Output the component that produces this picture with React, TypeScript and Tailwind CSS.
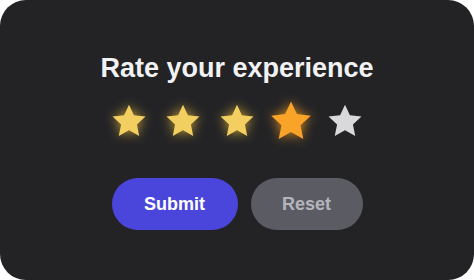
const STAR = "M12 2.2l2.95 6.35 6.95.8-5.15 4.75 1.4 6.85L12 17.5l-6.15 3.45 1.4-6.85L2.1 9.35l6.95-.8z";

type StarProps = { color: string; glow?: string; big?: boolean };

const Star = ({ color, glow, big }: StarProps) => (
  <div className="flex h-[48px] w-[54px] items-center justify-center">
    <svg
      viewBox="0 0 24 24"
      className={big ? "h-[48px] w-[48px]" : "h-[40px] w-[40px]"}
      style={glow ? { filter: `drop-shadow(0 0 6px ${glow})` } : undefined}
    >
      <path d={STAR} fill={color} />
    </svg>
  </div>
);

export default function App() {
  const stars: StarProps[] = [
    { color: "#f3cf62", glow: "rgba(245,200,60,0.75)" },
    { color: "#f3cf62", glow: "rgba(245,200,60,0.75)" },
    { color: "#f3cf62", glow: "rgba(245,200,60,0.75)" },
    { color: "#f9a429", glow: "rgba(250,160,30,0.85)", big: true },
    { color: "#d9d9dc" },
  ];

  return (
    <div className="h-[280px] w-[474px] bg-white">
      <div className="flex h-full w-full flex-col items-center rounded-[26px] bg-[#232326] pt-[51px] font-['Liberation_Sans',Arial,sans-serif]">
        <h1 className="text-[27px] font-bold leading-[34px] text-[#f2f2f4]">
          Rate your experience
        </h1>
        <div className="mt-[12px] flex items-center">
          {stars.map((s, i) => (
            <Star key={i} {...s} />
          ))}
        </div>
        <div className="mt-[33px] flex gap-[13px]">
          <button className="h-[52px] w-[126px] rounded-full bg-[#4a46dc] text-[18px] font-bold text-white">
            Submit
          </button>
          <button className="h-[52px] w-[112px] rounded-full bg-[#5b5b64] text-[18px] font-bold text-[#b4b4bb]">
            Reset
          </button>
        </div>
      </div>
    </div>
  );
}
